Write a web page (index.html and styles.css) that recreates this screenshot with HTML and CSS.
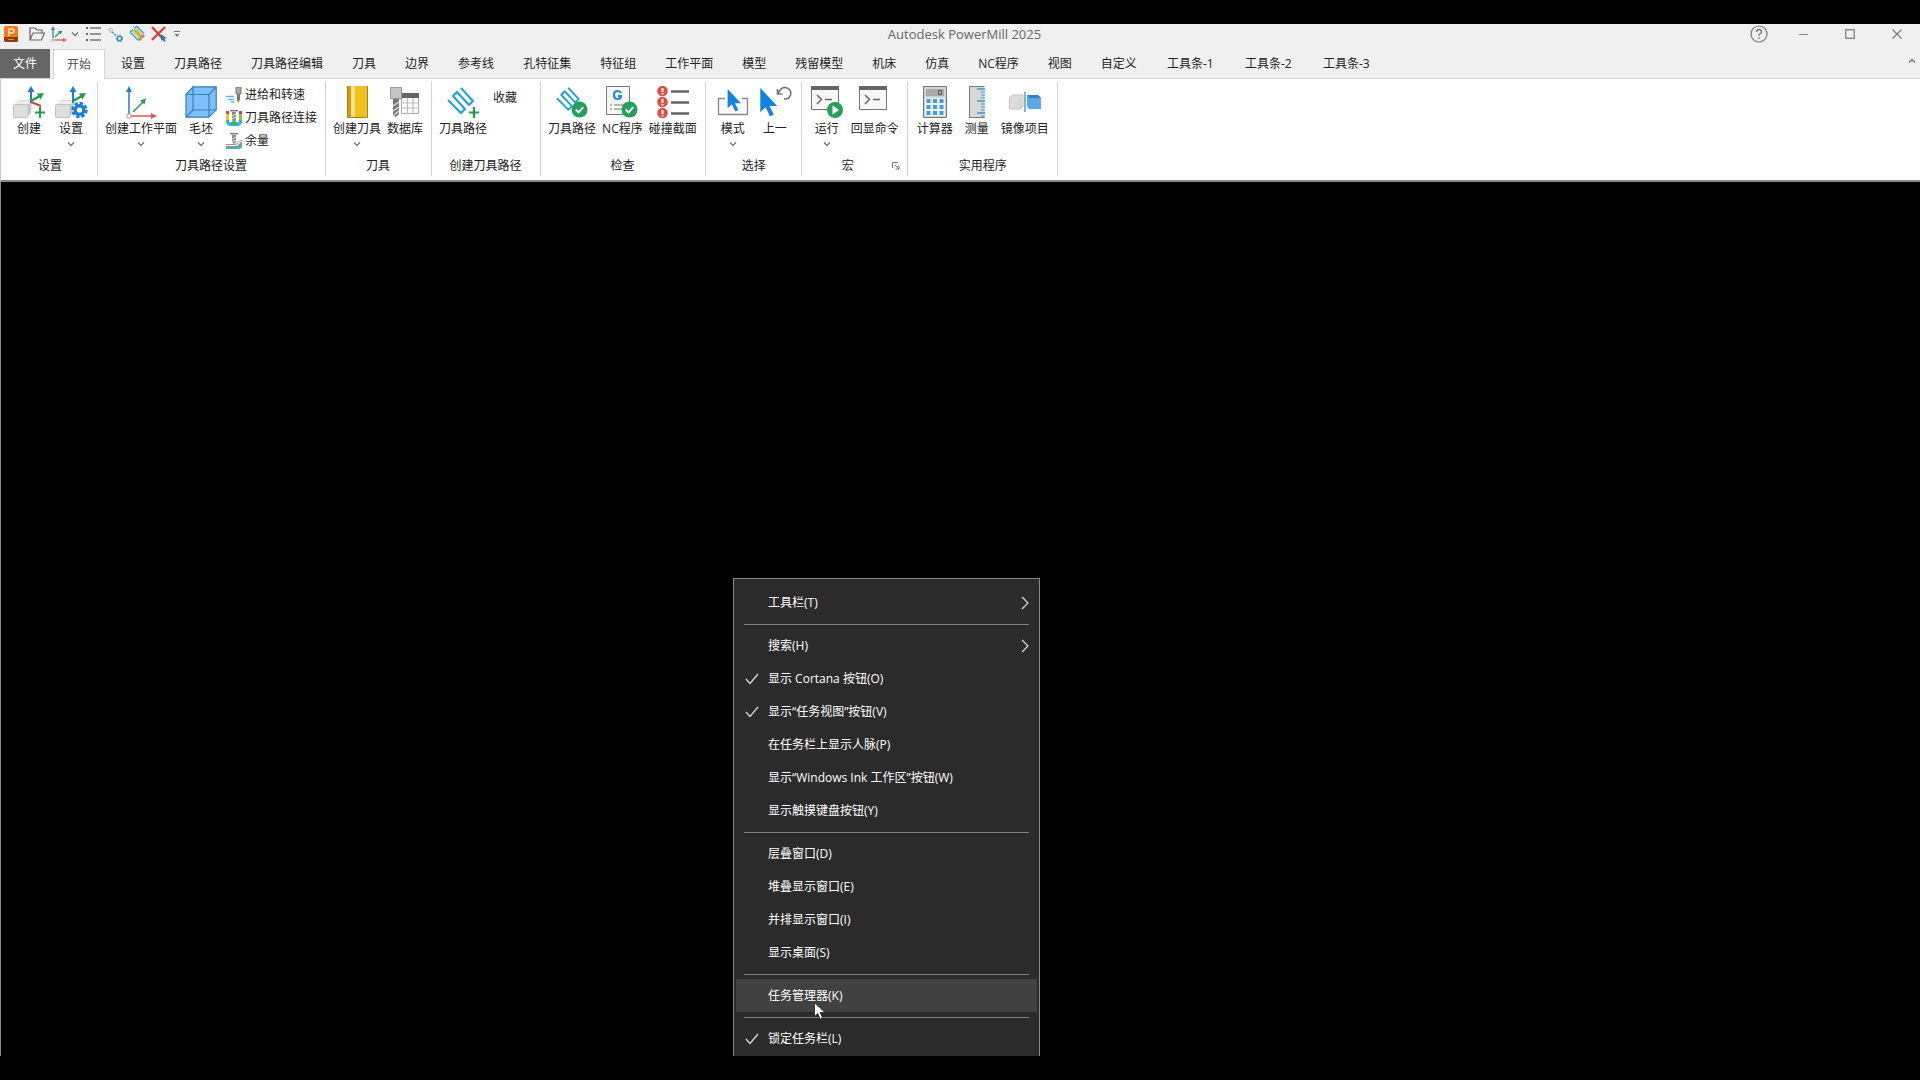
FILE: index.html
```html
<!DOCTYPE html>
<html lang="zh-CN">
<head>
<meta charset="utf-8">
<title>Autodesk PowerMill 2025</title>
<link rel="stylesheet" href="styles.css">
</head>
<body>
<svg class="defs" aria-hidden="true">
  <symbol id="chev" viewBox="0 0 8 8"><path d="M1 2.500l3 3 3-3" fill="none" stroke="#777" stroke-width="1.300"/></symbol>
  <symbol id="cube-axes" viewBox="0 0 32 32">
    <path d="M1 19l5-5h13l-1 13-5 5H1z" fill="#c9c9c9"/>
    <path d="M1 18.500l4-4h14l-4 4z" fill="#eee"/>
    <rect x=".5" y="18.500" width="14.500" height="13" rx="1" fill="#dedede" stroke="#c2c2c2"/>
    <path d="M18 17V5" stroke="#1c7fd6" stroke-width="2"/><path d="M18 0l3.500 6h-7z" fill="#1c7fd6"/>
    <path d="M18 15l9-5" stroke="#279b4d" stroke-width="2.500"/><path d="M31 7l-7 .5 3.500 6z" fill="#279b4d"/>
  </symbol>
  <symbol id="zigzag" viewBox="0 0 32 32">
    <path d="M1 13l13 13 4-4L6 9l4-4 12 13 4-4L14 1" transform="translate(0 1)" fill="none" stroke="#24a3d8" stroke-width="2.200" stroke-linejoin="round"/>
  </symbol>
  <symbol id="ok" viewBox="0 0 18 18"><circle cx="9" cy="9" r="8.500" fill="#24a05a"/><path d="M5 9l3 3 5-5.500" fill="none" stroke="#fff" stroke-width="2"/></symbol>
  <symbol id="pointer" viewBox="0 0 20 30"><path d="M1 0v25l5.500-5 4.500 9.500 4-2-4.500-9h8z" fill="#1583e0"/></symbol>
  <symbol id="check" viewBox="0 0 14 12"><path d="M1 6l4 4.500L13 1" fill="none" stroke="#ddd" stroke-width="1.200"/></symbol>
  <symbol id="arrow" viewBox="0 0 8 14"><path d="M1 1l6 6-6 6" fill="none" stroke="#ddd" stroke-width="1.200"/></symbol>
</svg>

<main class="app">
  <header class="titlebar">
    <div class="quick">
      <button class="qa brand" aria-label="PowerMill"><svg viewBox="0 0 16 16"><rect x="1" y="0" width="14" height="16" rx="2" fill="#ef7b1e"/><path d="M1 11h14v3q0 2-2 2H3q-2 0-2-2z" fill="#8f3b0a"/><path d="M6 10V3h3q2 0 2 2t-2 2H6" fill="none" stroke="#ffe0bd" stroke-width="1.600"/><path d="M5 13.500h6" stroke="#d98c50"/></svg></button>
      <button class="qa" aria-label="打开"><svg viewBox="0 0 16 16"><path d="M1 14V2h5l2 2h5v3M1 14l3-7h11.500L12.500 14z" fill="none" stroke="#666" stroke-width="1.200"/></svg></button>
      <span class="split">
        <button class="qa" aria-label="工作平面"><svg viewBox="0 0 16 16"><path d="M2 12V2" stroke="#2f86c9" stroke-width="1.300"/><path d="M2 0l2 4H0z" fill="#2f86c9"/><path d="M4 11l5-5" stroke="#279b4d" stroke-width="1.300"/><path d="M11 4.500l-1 4-3-3z" fill="#279b4d"/><path d="M4 14h9" stroke="#e2574c" stroke-width="1.300"/><path d="M16 14l-4-2v4z" fill="#e2574c"/><path d="M1 13h2v2H1z" fill="#fff" stroke="#aaa"/></svg></button>
        <button class="qa slim" aria-label="更多工作平面"><svg viewBox="0 0 8 8"><use href="#chev"/></svg></button>
      </span>
      <button class="qa" aria-label="列表"><svg viewBox="0 0 16 16"><path d="M5 2h11M5 8h11M5 14h11" stroke="#777" stroke-width="1.400"/><path d="M1 2h2M1 8h2M1 14h2" stroke="#41709c" stroke-width="2"/></svg></button>
      <button class="qa" aria-label="计算"><svg viewBox="0 0 16 16"><path d="M1 3l3-1 2 2-2 3z" fill="#ddd" stroke="#bbb"/><path d="M5 6l5 4" stroke="#3c8fc8" stroke-width="1.300" stroke-dasharray="2 1"/><circle cx="12.500" cy="12.500" r="2.200" fill="none" stroke="#3c8fc8" stroke-width="1.600"/><circle cx="12.500" cy="12.500" r="3.300" fill="none" stroke="#3c8fc8" stroke-dasharray="1.500 1.500"/></svg></button>
      <button class="qa" aria-label="编辑"><svg viewBox="0 0 16 16"><path d="M1 6l8 8M1 6l3-2.500M5 2l3-1.500 7 7" fill="none" stroke="#35a7d8" stroke-width="1.500"/><path d="M3.500 4.500l7 7M7 3l6 6" stroke="#f2bd42" stroke-width="2"/><path d="M5 3.500l7 7" stroke="#5fb878" stroke-width="1.200"/><path d="M9 15l1-4 3 3z" fill="#52a46a"/><path d="M11 11l3-3 2 2-3 3z" fill="#e97542"/></svg></button>
      <button class="qa" aria-label="删除"><svg viewBox="0 0 16 16"><path d="M1 1l12 13M14 1L1 14" stroke="#e23b32" stroke-width="2.200"/><path d="M10 8v7l2-2 1 3 1.500-.7L13.500 12.500H16z" fill="#2878bd"/></svg></button>
      <button class="qa slim" aria-label="自定义快速访问"><svg viewBox="0 0 8 8"><path d="M1 1.500h6" stroke="#777"/><path d="M1.500 4h5L4 7z" fill="#777"/></svg></button>
    </div>
    <h1 class="title">Autodesk PowerMill 2025</h1>
    <div class="winctl">
      <button class="help" aria-label="帮助"><svg viewBox="0 0 18 18"><circle cx="9" cy="9" r="8" fill="none" stroke="#777" stroke-width="1.200"/><path d="M6.500 7q0-2.500 2.500-2.500T11.500 7Q11.500 8.500 9 9.500V11" fill="none" stroke="#777" stroke-width="1.300"/><path d="M8.300 12.500h1.500V14H8.300z" fill="#777"/></svg></button>
      <button aria-label="最小化"><svg viewBox="0 0 10 10"><path d="M1 5.500h9" stroke="#888"/></svg></button>
      <button aria-label="最大化"><svg viewBox="0 0 10 10"><rect x=".75" y=".75" width="8.500" height="8.500" fill="none" stroke="#777" stroke-width="1.200"/></svg></button>
      <button aria-label="关闭"><svg viewBox="0 0 10 10"><path d="M.5 .5l9 9M9.500 .5l-9 9" stroke="#777" stroke-width="1.200"/></svg></button>
    </div>
  </header>

  <nav class="tabs">
    <button class="tab file">文件</button>
    <button class="tab active">开始</button>
    <button class="tab">设置</button>
    <button class="tab">刀具路径</button>
    <button class="tab">刀具路径编辑</button>
    <button class="tab">刀具</button>
    <button class="tab">边界</button>
    <button class="tab">参考线</button>
    <button class="tab">孔特征集</button>
    <button class="tab">特征组</button>
    <button class="tab">工作平面</button>
    <button class="tab">模型</button>
    <button class="tab">残留模型</button>
    <button class="tab">机床</button>
    <button class="tab">仿真</button>
    <button class="tab">NC程序</button>
    <button class="tab">视图</button>
    <button class="tab">自定义</button>
    <button class="tab numbered">工具条-1</button>
    <button class="tab numbered">工具条-2</button>
    <button class="tab numbered">工具条-3</button>
    <button class="collapse" aria-label="折叠功能区"><svg viewBox="0 0 8 8"><path d="M1 5.500l3-3 3 3" fill="none" stroke="#777" stroke-width="1.500"/></svg></button>
  </nav>

  <div class="ribbon">
    <section class="group roomy">
      <div class="tools">
        <button class="tool"><svg class="ico" viewBox="0 0 32 32"><use href="#cube-axes"/><path d="M18 16l10 4" stroke="#c8423a" stroke-width="2"/><path d="M27 21v11M22 26.500h10" stroke="#279b4d" stroke-width="2.200"/></svg>创建</button>
        <button class="tool"><svg class="ico" viewBox="0 0 32 32"><use href="#cube-axes"/><circle cx="24.500" cy="24" r="6" fill="#1c7fd6"/><circle cx="24.500" cy="24" r="6.700" fill="none" stroke="#1c7fd6" stroke-width="3" stroke-dasharray="3.300 1.960"/><circle cx="24.500" cy="24" r="2.600" fill="#fff"/></svg>设置<svg class="chev"><use href="#chev"/></svg></button>
      </div>
      <h2 class="caption">设置</h2>
    </section>

    <section class="group">
      <div class="tools">
        <button class="tool"><svg class="ico" viewBox="0 0 32 32"><path d="M4 28V5" stroke="#1f7fc4" stroke-width="1.500"/><path d="M4 0l3 6H1z" fill="#1f7fc4"/><path d="M8 26L18 16" stroke="#279b4d" stroke-width="1.500"/><path d="M21 12.500l-1.500 6-4.500-4z" fill="#279b4d"/><path d="M6 30h21" stroke="#e2574c" stroke-width="1.500"/><path d="M32 30l-6-3v6z" fill="#e2574c"/><path d="M2 28h4v4H2z" fill="#f4f4f4" stroke="#aaa"/></svg>创建工作平面<svg class="chev"><use href="#chev"/></svg></button>
        <button class="tool"><svg class="ico" viewBox="0 0 32 32"><path d="M1 8.500L8 .8h23.200v23L24 31.200H1z" fill="#7cc1fb"/><path d="M1 8.500h23v22.700H1zM8 .8h23.200v23L24 31.200M24 8.500L31.200.8M1 8.500L8 .8v23M8 24L1 31.200M8 24h23" fill="none" stroke="#3a7eb4" stroke-width="1.200"/></svg>毛坯<svg class="chev"><use href="#chev"/></svg></button>
        <div class="stack">
          <button class="mini"><svg viewBox="0 0 16 16"><path d="M10 0h5v7h-5z" fill="#aaa" stroke="#777"/><path d="M11 7h3v5l-1.500 4L11 13z" fill="#777"/><path d="M0 9.500h8M2 12.500h6M5 15h3" stroke="#5db4dc" stroke-width="1.400"/></svg>进给和转速</button>
          <button class="mini"><svg viewBox="0 0 16 16"><path d="M1.500 4v7q0 4 6.500 4t6.500-4V4" fill="none" stroke="#27b6dd" stroke-width="3"/><path d="M1.500 4v6" stroke="#f2c230" stroke-width="3"/><path d="M14.500 4v6" stroke="#8ac440" stroke-width="3"/><path d="M1.500 1v3M14.500 1v3" stroke="#d5414d" stroke-width="3"/><path d="M5 14q3-3 6 0" stroke="#43ae58" stroke-width="3" fill="none"/><path d="M4 .7h8" stroke="#777" stroke-width="1.400"/><path d="M6 2h4v8l-2 2-2-2z" fill="#888"/><path d="M6 6l4-2M6 9l4-2" stroke="#eee"/></svg>刀具路径连接</button>
          <button class="mini"><svg viewBox="0 0 16 16"><path d="M0 11.500h9q2 0 3-2t4-2" fill="none" stroke="#e07560"/><path d="M0 13h10q2 0 3-2t3-2v4q0 3-3 3H0z" fill="#55aab6"/><path d="M4 .7h8" stroke="#777" stroke-width="1.400"/><path d="M6 2h4v7l-2 2-2-2z" fill="#888"/><path d="M6 6l4-2M6 9l4-2" stroke="#eee"/></svg>余量</button>
        </div>
      </div>
      <h2 class="caption">刀具路径设置</h2>
    </section>

    <section class="group">
      <div class="tools">
        <button class="tool"><svg class="ico" viewBox="0 0 32 32"><path d="M6 0h21v32H6z" fill="#f0c11d"/><path d="M7 0h3v32H7z" fill="#d79d0a"/><path d="M10 0h4v32h-4z" fill="#ffe386"/><path d="M6.500 0v31.500h20V0" fill="none" stroke="#9f8033"/></svg>创建刀具<svg class="chev"><use href="#chev"/></svg></button>
        <button class="tool"><svg class="ico" viewBox="0 0 32 32"><path d="M12.500 7.500h17v20h-17z" fill="#fff" stroke="#aaa"/><path d="M12 7h18v5H12z" fill="#666"/><path d="M12 17h18M12 22h18M18.500 12v16M24 12v16" stroke="#bbb" stroke-width="1.200"/><path d="M1.500 1.500h11v11h-11z" fill="#c5c5c5" stroke="#999"/><path d="M4 13h6v15l-3 3-3-2z" fill="#777"/><path d="M4 20l6-4M4 25l6-4M5 29l5-4" stroke="#ddd" stroke-width="1.500"/></svg>数据库</button>
      </div>
      <h2 class="caption">刀具</h2>
    </section>

    <section class="group">
      <div class="tools">
        <button class="tool"><svg class="ico" viewBox="0 0 32 32"><use href="#zigzag"/><path d="M27 21v11M22 26.500h10" stroke="#279b4d" stroke-width="2.200"/></svg>刀具路径</button>
        <button class="text">收藏</button>
      </div>
      <h2 class="caption">创建刀具路径</h2>
    </section>

    <section class="group">
      <div class="tools">
        <button class="tool"><svg class="ico" viewBox="0 0 32 32"><use href="#zigzag" width="28" height="28"/><use href="#ok" x="15" y="15" width="17" height="17"/></svg>刀具路径</button>
        <button class="tool"><svg class="ico" viewBox="0 0 32 32"><path d="M.5 .5h23v28H.5z" fill="#f7f7f7" stroke="#777"/><path d="M15 7q-1-2-3.500-2Q8 5 8 9t3.500 4 3.500-3h-3" fill="none" stroke="#2385df" stroke-width="2.200"/><path d="M4 19h2M4 23h2M8 19h12M8 23h9" stroke="#777" stroke-width="1.200"/><use href="#ok" x="15" y="15" width="17" height="17"/></svg>NC程序</button>
        <button class="tool"><svg class="ico" viewBox="0 0 32 32"><g fill="#dc5144"><circle cx="5.500" cy="5" r="5.300"/><circle cx="5.500" cy="16" r="5.300"/><circle cx="5.500" cy="27" r="5.300"/></g><path d="M5.500 2v4M5.500 13v4M5.500 24v4M5.500 7v1.500M5.500 18v1.500M5.500 29v1.500" stroke="#fff" stroke-width="2"/><path d="M14 5.500h18M14 16.500h18M14 27.500h18" stroke="#666" stroke-width="2.500"/></svg>碰撞截面</button>
      </div>
      <h2 class="caption">检查</h2>
    </section>

    <section class="group roomy">
      <div class="tools">
        <button class="tool"><svg class="ico" viewBox="0 0 32 32"><path d="M1.500 12.500h29v16h-29z" fill="#fafafa" stroke="#888" stroke-width="1.300"/><path d="M8 11h17v4H8z" fill="#fff"/><use href="#pointer" x="9" y="3" width="17" height="23"/></svg>模式<svg class="chev"><use href="#chev"/></svg></button>
        <button class="tool"><svg class="ico" viewBox="0 0 32 32"><use href="#pointer" x="0" y="2" width="20" height="29"/><path d="M18.500 3v5h5M19 7.500q4-8 9-5.500t3.500 7-6.500 4" fill="none" stroke="#777" stroke-width="1.600"/></svg>上一</button>
      </div>
      <h2 class="caption">选择</h2>
    </section>

    <section class="group">
      <div class="tools">
        <button class="tool"><svg class="ico" viewBox="0 0 32 32"><path d="M.5 .5h27v23H.5z" fill="#f7f7f7" stroke="#777"/><path d="M0 0h28v4H0z" fill="#666"/><path d="M6 9l4.500 4.500L6 18M14 13.500h7" fill="none" stroke="#666" stroke-width="1.500"/><circle cx="24" cy="24" r="8" fill="#24a05a"/><path d="M21.500 19.500l6.500 4.500-6.500 4.500z" fill="#fff"/></svg>运行<svg class="chev"><use href="#chev"/></svg></button>
        <button class="tool"><svg class="ico" viewBox="0 0 32 32"><path d="M.5 .5h27v23H.5z" fill="#f7f7f7" stroke="#777"/><path d="M0 0h28v4H0z" fill="#666"/><path d="M6 9l4.500 4.500L6 18M14 13.500h7" fill="none" stroke="#666" stroke-width="1.500"/></svg>回显命令</button>
      </div>
      <div class="foot">
        <h2 class="caption">宏</h2>
        <button class="launch" aria-label="宏选项"><svg viewBox="0 0 8 8"><path d="M.5 6V.5H6M3 3l4 4M7 3.500V7H3.500" fill="none" stroke="#777"/></svg></button>
      </div>
    </section>

    <section class="group roomy">
      <div class="tools">
        <button class="tool"><svg class="ico" viewBox="0 0 32 32"><path d="M4.500 .5h23v31h-23z" fill="#cdd3d8" stroke="#777"/><path d="M7 3h18v7H7z" fill="#aaa"/><path d="M19.500 4.500h3v4h-3z" fill="none" stroke="#555"/><path d="M6 12h20v18H6z" fill="#eaf3fa"/><path d="M7.500 15h17M7.500 21h17M7.500 27h17" stroke="#479bd8" stroke-width="4" stroke-dasharray="4 2.500"/></svg>计算器</button>
        <button class="tool"><svg class="ico" viewBox="0 0 32 32"><path d="M8 .5h15.500v31H8z" fill="#d8d8d8"/><path d="M23.500 .5H8.500v31h15" fill="none" stroke="#777"/><path d="M16 3h8M16 15h8M16 27h8" stroke="#3f94cf" stroke-width="1.500"/><path d="M20 6h4M20 9h4M20 12h4M20 18h4M20 21h4M20 24h4M20 30h4" stroke="#3f94cf"/></svg>测量</button>
        <button class="tool"><svg class="ico" viewBox="0 0 32 32"><path d="M.5 12l3-3H14v11l-3 3H.5z" fill="#dcdcdc" stroke="#c4c4c4"/><path d="M11 12v10" stroke="#ccc"/><path d="M18 9h11l3 3v11H20l-2-3z" fill="#59aae4"/><path d="M18 9h11l3 3H21z" fill="#347fb8"/><path d="M16 6v20" stroke="#4ba0d3" stroke-width="1.500"/></svg>镜像项目</button>
      </div>
      <h2 class="caption">实用程序</h2>
    </section>
  </div>

  <div class="canvas"></div>

  <menu class="context">
    <li><button class="entry">工具栏(T)<svg class="more"><use href="#arrow"/></svg></button></li>
    <li class="rule"></li>
    <li><button class="entry">搜索(H)<svg class="more"><use href="#arrow"/></svg></button></li>
    <li><button class="entry"><svg class="tick"><use href="#check"/></svg>显示 Cortana 按钮(O)</button></li>
    <li><button class="entry"><svg class="tick"><use href="#check"/></svg>显示“任务视图”按钮(V)</button></li>
    <li><button class="entry">在任务栏上显示人脉(P)</button></li>
    <li><button class="entry">显示“Windows Ink 工作区”按钮(W)</button></li>
    <li><button class="entry">显示触摸键盘按钮(Y)</button></li>
    <li class="rule"></li>
    <li><button class="entry">层叠窗口(D)</button></li>
    <li><button class="entry">堆叠显示窗口(E)</button></li>
    <li><button class="entry">并排显示窗口(I)</button></li>
    <li><button class="entry">显示桌面(S)</button></li>
    <li class="rule"></li>
    <li><button class="entry hover">任务管理器(K)</button></li>
    <li class="rule"></li>
    <li><button class="entry"><svg class="tick"><use href="#check"/></svg>锁定任务栏(L)</button></li>
  </menu>
  <svg class="cursor" viewBox="0 0 12 18"><path d="M.5 .5v14l3.300-3 2.400 5.500 2.500-1-2.500-5.500h4.800z" fill="#fff" stroke="#222" stroke-width=".8"/></svg>
</main>
</body>
</html>
```
FILE: styles.css
```css
* { box-sizing: border-box; }

body {
  margin: 0;
  padding: 24px 0;
  height: 100vh;
  background: #000;
  color: #222;
  font: 12px/16px "Open Sans", "Noto Sans CJK SC", sans-serif;
}

button {
  margin: 0;
  padding: 0;
  border: 0;
  background: none;
  color: inherit;
  font: inherit;
  white-space: nowrap;
}

svg { display: block; }
.defs { position: absolute; width: 0; height: 0; }

.app {
  position: relative;
  display: flex;
  flex-direction: column;
  height: 100%;
  overflow: hidden;
  background: #f0f0f0;
}

/* Title bar */
.titlebar {
  display: grid;
  grid-template-columns: 1fr auto 1fr;
  align-items: center;
  height: 20px;
  padding-left: 3px;
}
.quick { display: flex; align-items: center; gap: 6px; }
.qa { width: 16px; }
.qa svg { width: 100%; height: 16px; }
.slim { width: 8px; }
.slim svg { height: 8px; }
.brand { margin-right: 4px; }
.split { display: flex; align-items: center; gap: 4px; }
.title { margin: 0; padding-left: 6px; color: #666; font-size: 13px; font-weight: 400; }
.winctl { display: flex; justify-content: flex-end; }
.winctl button { display: grid; place-items: center; width: 47px; height: 20px; }
.winctl svg { width: 10px; height: 10px; }
.winctl .help { width: 41px; }
.winctl .help svg { width: 18px; height: 18px; }

/* Tab strip */
.tabs {
  display: flex;
  gap: 3px;
  margin-top: 5px;
  height: 30px;
  border-bottom: 1px solid #d4d4d4;
}
.tab { height: 29px; padding: 0 13px; }
.file { background: #666; color: #fff; }
.active {
  height: 30px;
  border: 1px solid #d4d4d4;
  border-bottom: 0;
  background: #fff;
  color: #555;
}
.numbered { min-width: 75px; }
.collapse { width: 8px; margin: 0 4px 6px auto; }
.collapse svg { width: 8px; height: 8px; }

/* Ribbon */
.ribbon {
  display: flex;
  padding: 2px 0 4px 1px;
  border-bottom: 2px solid #888;
  border-left: 1px solid #ccc;
  background: #fff;
}
.group {
  display: flex;
  flex-direction: column;
  padding: 5px 5px 2px 4px;
  border-right: 1px solid #d4d4d4;
}
.roomy { padding-left: 6px; }
.tools { display: flex; align-items: flex-start; height: 72px; }
.tool {
  display: flex;
  flex-direction: column;
  align-items: center;
  min-width: 42px;
  padding: 0 3px;
}
.ico { width: 32px; height: 32px; margin-bottom: 3px; overflow: visible; }
.chev { width: 8px; height: 8px; margin-top: 3px; }
.stack { display: grid; gap: 7px; padding: 1px 0 0 4px; width: 98px; }
.mini { display: flex; align-items: center; gap: 3px; height: 16px; }
.mini svg { width: 16px; height: 16px; }
.text { height: 24px; margin-right: 15px; padding: 0 3px; }
.caption { margin: 0; font-size: 12px; font-weight: 400; text-align: center; }
.foot { display: grid; grid-template-columns: 1fr auto 1fr; align-items: center; }
.foot .caption { grid-column: 2; padding-right: 12px; }
.launch { justify-self: end; margin-right: 2px; }
.launch svg { width: 8px; height: 8px; }

.canvas { flex: 1; border-left: 1px solid #888; background: #000; }

/* Taskbar context menu */
.context {
  position: absolute;
  top: 554px;
  left: 733px;
  width: 307px;
  margin: 0;
  padding: 7px 2px;
  border: 1px solid #888;
  background: #2b2b2b;
  color: #fff;
  list-style: none;
}
.entry {
  display: grid;
  grid-template-columns: 23px 1fr auto;
  align-items: center;
  width: 100%;
  height: 33px;
  padding: 1px 8px 0 9px;
  text-align: left;
}
.entry::before { content: ""; grid-column: 1; grid-row: 1; }
.tick { grid-column: 1; grid-row: 1; width: 14px; height: 12px; }
.more { width: 8px; height: 14px; }
.hover { background: #414141; }
.rule { height: 10px; padding: 5px 8px 0; }
.rule::before { content: ""; display: block; height: 1px; background: #808080; }

.cursor { position: absolute; top: 978px; left: 814px; width: 12px; height: 18px; }
```
